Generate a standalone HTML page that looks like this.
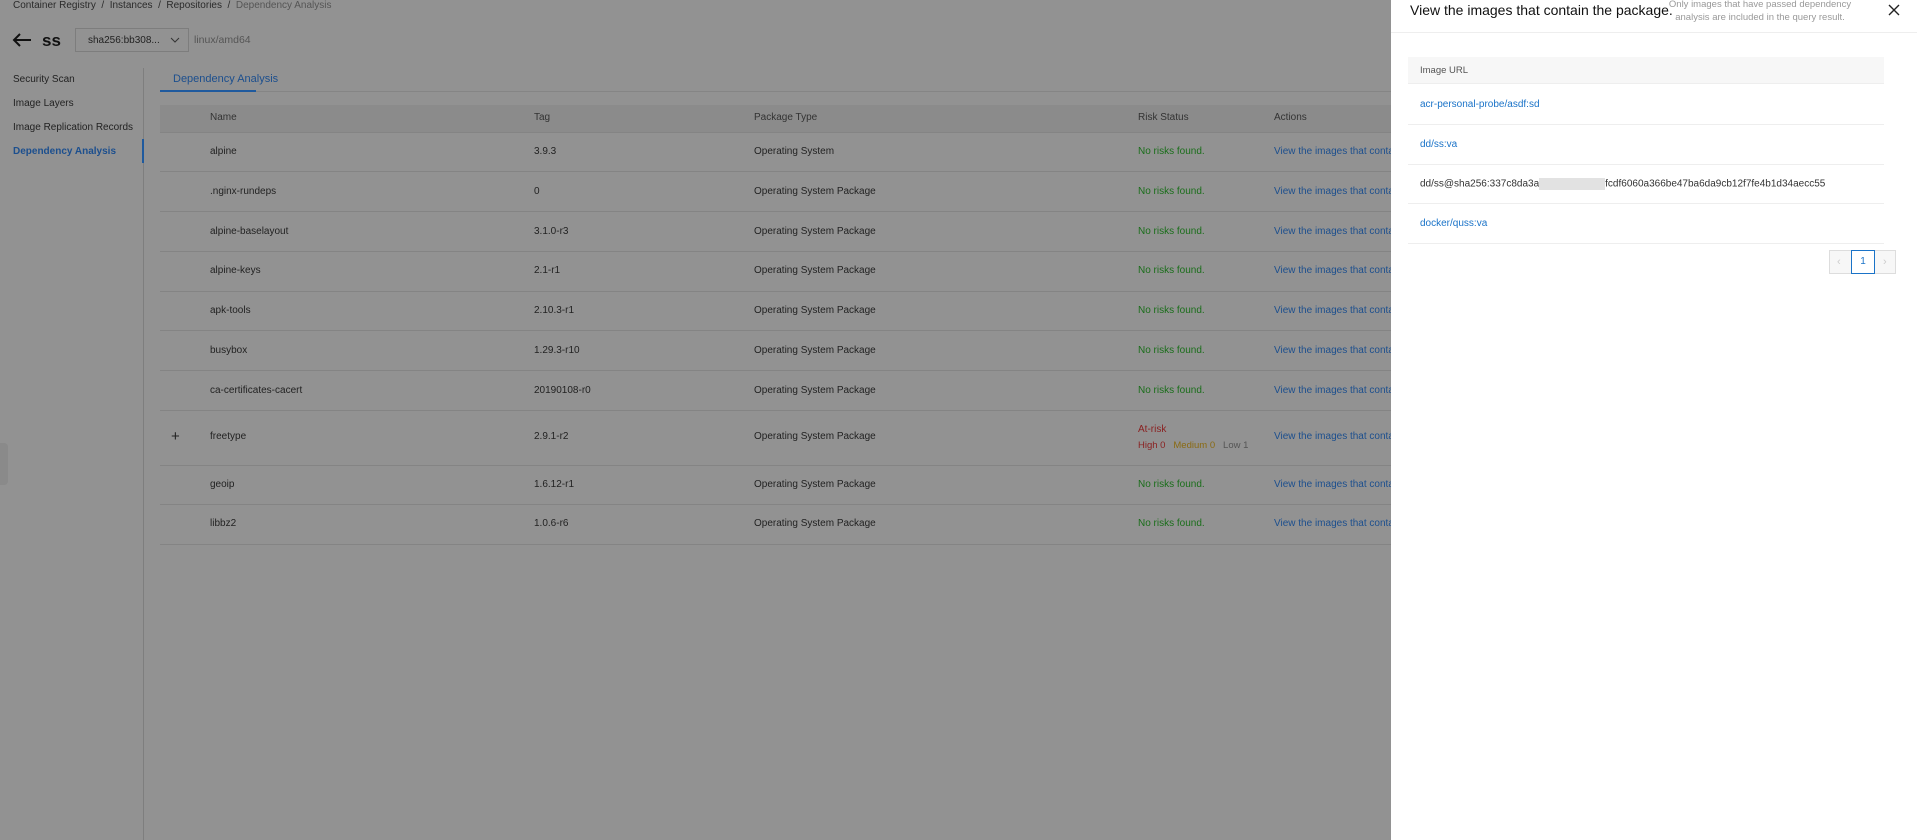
<!DOCTYPE html>
<html><head><meta charset="utf-8">
<style>
*{margin:0;padding:0;box-sizing:border-box}
body{width:1917px;height:840px;overflow:hidden;background:#929292;font-family:"Liberation Sans",Arial,sans-serif;font-size:10px;color:#222;position:relative}
.abs{position:absolute;white-space:nowrap}
.bc{top:0;left:13px;font-size:10px;color:#2a2a2a}
.bc span{color:#555}
.side{position:absolute;left:143px;top:68px;width:1px;height:772px;background:#7e7e7e}
.side2{position:absolute;left:142px;top:139px;width:2px;height:24px;background:#1f5a9e}
.sitem{left:13px;font-size:10px;color:#222}
.tabline{position:absolute;left:160px;top:91px;width:1240px;height:1px;background:#858585}
.tabul{position:absolute;left:160px;top:90px;width:96px;height:2px;background:#1f5a9e}
.thead{position:absolute;left:160px;top:105px;width:1240px;height:27px;background:#8b8b8b}
.rl{position:absolute;left:160px;width:1240px;height:1px;background:#848484}
.c{font-size:10px;color:#222}
.g{color:#1a6e1a}
.b{color:#1c4f8e}
.drawer{position:absolute;left:1391px;top:0;width:526px;height:840px;background:#fff}
</style></head><body>
<div class="abs bc">Container Registry &nbsp;/&nbsp; Instances &nbsp;/&nbsp; Repositories &nbsp;/&nbsp; <span>Dependency Analysis</span></div>
<svg class="abs" style="left:11px;top:32px" width="22" height="16" viewBox="0 0 22 16"><path d="M20 8H3M9 2L3 8l6 6" stroke="#111" stroke-width="2" fill="none"/></svg>
<div class="abs" style="left:42px;top:31px;font-size:17px;font-weight:bold;color:#111">ss</div>
<div class="abs" style="left:75px;top:28px;height:24px;border:1px solid #7d7d7d;width:114px;font-size:10px;padding:6px 0 0 12px;color:#222">sha256:bb308...<svg style="position:absolute;right:8px;top:8px" width="10" height="7" viewBox="0 0 10 7"><path d="M1 1l4 4 4-4" stroke="#333" fill="none"/></svg></div>
<div class="abs" style="left:194px;top:34px;font-size:10.5px;color:#555">linux/amd64</div>
<div class="side"></div><div class="side2"></div>
<div class="abs sitem" style="top:74px">Security Scan</div>
<div class="abs sitem" style="top:98px">Image Layers</div>
<div class="abs sitem" style="top:122px">Image Replication Records</div>
<div class="abs sitem" style="top:146px;color:#1c4f8e;font-weight:bold">Dependency Analysis</div>
<div class="tabline"></div><div class="tabul"></div>
<div class="abs" style="left:173px;top:73px;font-size:11px;color:#1c4f8e">Dependency Analysis</div>
<div class="thead"></div>
<div class="abs c" style="left:210px;top:112px;color:#333">Name</div>
<div class="abs c" style="left:534px;top:112px;color:#333">Tag</div>
<div class="abs c" style="left:754px;top:112px;color:#333">Package Type</div>
<div class="abs c" style="left:1138px;top:112px;color:#333">Risk Status</div>
<div class="abs c" style="left:1274px;top:112px;color:#333">Actions</div>

<div class="rl" style="top:132px"></div>
<div class="abs c" style="left:210px;top:146px">alpine</div><div class="abs c" style="left:534px;top:146px">3.9.3</div><div class="abs c" style="left:754px;top:146px">Operating System</div><div class="abs c g" style="left:1138px;top:146px">No risks found.</div><div class="abs c b" style="left:1274px;top:146px">View the images that conta</div>
<div class="rl" style="top:171px"></div>
<div class="abs c" style="left:210px;top:186px">.nginx-rundeps</div><div class="abs c" style="left:534px;top:186px">0</div><div class="abs c" style="left:754px;top:186px">Operating System Package</div><div class="abs c g" style="left:1138px;top:186px">No risks found.</div><div class="abs c b" style="left:1274px;top:186px">View the images that conta</div>
<div class="rl" style="top:211px"></div>
<div class="abs c" style="left:210px;top:226px">alpine-baselayout</div><div class="abs c" style="left:534px;top:226px">3.1.0-r3</div><div class="abs c" style="left:754px;top:226px">Operating System Package</div><div class="abs c g" style="left:1138px;top:226px">No risks found.</div><div class="abs c b" style="left:1274px;top:226px">View the images that conta</div>
<div class="rl" style="top:251px"></div>
<div class="abs c" style="left:210px;top:265px">alpine-keys</div><div class="abs c" style="left:534px;top:265px">2.1-r1</div><div class="abs c" style="left:754px;top:265px">Operating System Package</div><div class="abs c g" style="left:1138px;top:265px">No risks found.</div><div class="abs c b" style="left:1274px;top:265px">View the images that conta</div>
<div class="rl" style="top:291px"></div>
<div class="abs c" style="left:210px;top:305px">apk-tools</div><div class="abs c" style="left:534px;top:305px">2.10.3-r1</div><div class="abs c" style="left:754px;top:305px">Operating System Package</div><div class="abs c g" style="left:1138px;top:305px">No risks found.</div><div class="abs c b" style="left:1274px;top:305px">View the images that conta</div>
<div class="rl" style="top:330px"></div>
<div class="abs c" style="left:210px;top:345px">busybox</div><div class="abs c" style="left:534px;top:345px">1.29.3-r10</div><div class="abs c" style="left:754px;top:345px">Operating System Package</div><div class="abs c g" style="left:1138px;top:345px">No risks found.</div><div class="abs c b" style="left:1274px;top:345px">View the images that conta</div>
<div class="rl" style="top:370px"></div>
<div class="abs c" style="left:210px;top:385px">ca-certificates-cacert</div><div class="abs c" style="left:534px;top:385px">20190108-r0</div><div class="abs c" style="left:754px;top:385px">Operating System Package</div><div class="abs c g" style="left:1138px;top:385px">No risks found.</div><div class="abs c b" style="left:1274px;top:385px">View the images that conta</div>
<div class="rl" style="top:410px"></div>
<div class="abs" style="left:171px;top:428px;font-size:15px;color:#222">+</div>
<div class="abs c" style="left:210px;top:431px">freetype</div><div class="abs c" style="left:534px;top:431px">2.9.1-r2</div><div class="abs c" style="left:754px;top:431px">Operating System Package</div>
<div class="abs c" style="left:1138px;top:424px;color:#8a1f1f">At-risk</div>
<div class="abs c" style="left:1138px;top:440px;font-size:9.5px"><span style="color:#8a1f1f">High 0</span>&nbsp;&nbsp; <span style="color:#8a6a12">Medium 0</span>&nbsp;&nbsp; <span style="color:#555">Low 1</span></div>
<div class="abs c b" style="left:1274px;top:431px">View the images that conta</div>
<div class="rl" style="top:465px"></div>
<div class="abs c" style="left:210px;top:479px">geoip</div><div class="abs c" style="left:534px;top:479px">1.6.12-r1</div><div class="abs c" style="left:754px;top:479px">Operating System Package</div><div class="abs c g" style="left:1138px;top:479px">No risks found.</div><div class="abs c b" style="left:1274px;top:479px">View the images that conta</div>
<div class="rl" style="top:504px"></div>
<div class="abs c" style="left:210px;top:518px">libbz2</div><div class="abs c" style="left:534px;top:518px">1.0.6-r6</div><div class="abs c" style="left:754px;top:518px">Operating System Package</div><div class="abs c g" style="left:1138px;top:518px">No risks found.</div><div class="abs c b" style="left:1274px;top:518px">View the images that conta</div>
<div class="rl" style="top:544px"></div>
<div class="abs" style="left:0;top:443px;width:8px;height:42px;background:#8a8a8a;border-radius:0 4px 4px 0"></div>

<div class="drawer">
  <div class="abs" style="left:19px;top:2px;font-size:14px;color:#111">View the images that contain the package.</div>
  <div class="abs" style="left:274px;top:-2px;font-size:9.5px;color:#999;line-height:13px;white-space:normal;width:190px;text-align:center">Only images that have passed dependency analysis are included in the query result.</div>
  <svg class="abs" style="left:497px;top:4px" width="12" height="12" viewBox="0 0 12 12"><path d="M1 1l10 10M11 1L1 11" stroke="#222" stroke-width="1.4"/></svg>
  <div class="abs" style="left:0;top:32px;width:526px;height:1px;background:#eee"></div>
  <div class="abs" style="left:17px;top:57px;width:476px;height:27px;background:#f7f7f7;border-bottom:1px solid #eee"></div>
  <div class="abs" style="left:29px;top:65px;font-size:9.5px;color:#555">Image URL</div>
  <div class="abs" style="left:29px;top:99px;font-size:10px;color:#1a73c8">acr-personal-probe/asdf:sd</div>
  <div class="abs" style="left:17px;top:124px;width:476px;height:1px;background:#eee"></div>
  <div class="abs" style="left:29px;top:139px;font-size:10px;color:#1a73c8">dd/ss:va</div>
  <div class="abs" style="left:17px;top:164px;width:476px;height:1px;background:#eee"></div>
  <div class="abs" style="left:29px;top:178px;font-size:10px;color:#333">dd/ss@sha256:337c8da3a<span style="display:inline-block;width:66px;height:12px;background:#e2e2e2;vertical-align:middle"></span>fcdf6060a366be47ba6da9cb12f7fe4b1d34aecc55</div>
  <div class="abs" style="left:17px;top:203px;width:476px;height:1px;background:#eee"></div>
  <div class="abs" style="left:29px;top:218px;font-size:10px;color:#1a73c8">docker/quss:va</div>
  <div class="abs" style="left:17px;top:243px;width:476px;height:1px;background:#eee"></div>
  <div class="abs" style="left:438px;top:250px;width:67px;height:24px;border:1px solid #ddd;background:#f7f7f7"></div>
  <div class="abs" style="left:460px;top:250px;width:24px;height:24px;border:1px solid #1a73c8;background:#fff;font-size:10px;color:#1a73c8;text-align:center;line-height:22px">1</div>
  <div class="abs" style="left:446px;top:256px;color:#ccc;font-size:11px">‹</div>
  <div class="abs" style="left:492px;top:256px;color:#ccc;font-size:11px">›</div>
</div>
</body></html>
